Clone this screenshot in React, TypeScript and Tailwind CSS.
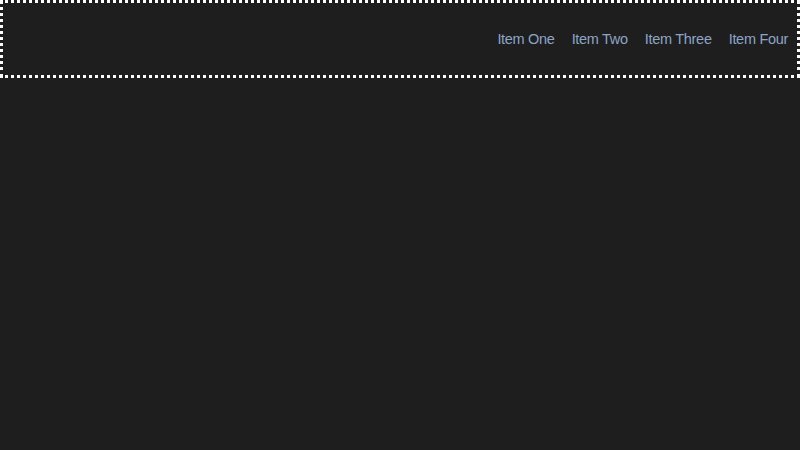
export default function App() {
  const items = ["Item One", "Item Two", "Item Three", "Item Four"];
  return (
    <div className="w-[800px] h-[450px] bg-[#1e1e1e] overflow-hidden" style={{ fontFamily: '"Liberation Sans", Arial, sans-serif' }}>
      <header className="h-[78px] border-[3px] border-dotted border-white flex items-center justify-end pr-[3px] pt-[1px]">
        <nav className="flex gap-[17px] pr-[6px]">
          {items.map((t) => (
            <a key={t} href="#" className="text-[14.5px] tracking-[-0.3px] text-[#8ba5c7] no-underline">
              {t}
            </a>
          ))}
        </nav>
      </header>
    </div>
  );
}
